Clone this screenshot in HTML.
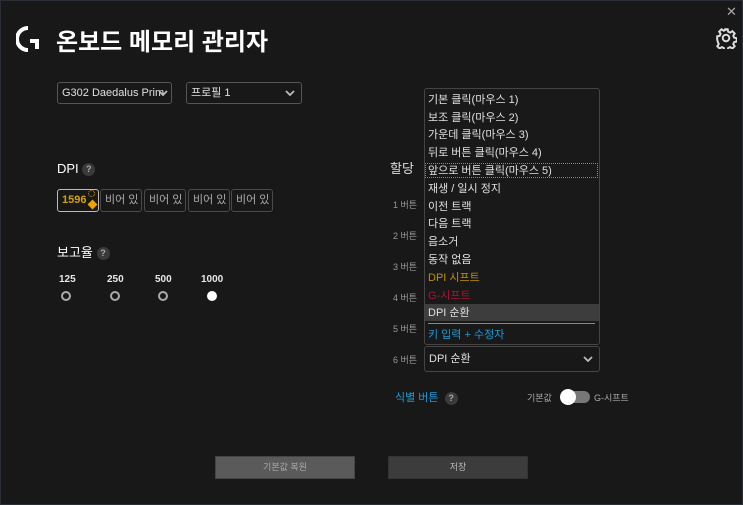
<!DOCTYPE html>
<html><head><meta charset="utf-8"><style>
*{margin:0;padding:0;box-sizing:border-box}
body{width:743px;height:505px;background:#181818;overflow:hidden;position:relative;font-family:"Liberation Sans","Noto Sans CJK KR",sans-serif;color:#e8e8e8}
.a{position:absolute;white-space:nowrap}
.q{display:inline-block;width:13px;height:13px;border-radius:50%;background:#3a3a3a;color:#aaa;font-size:9px;text-align:center;line-height:13px;vertical-align:middle;font-weight:bold}
.sel{position:absolute;border:1px solid #555;border-radius:3px;font-size:11px;padding-left:4px;line-height:20px;color:#e0e0e0;overflow:hidden}
.sel svg{position:absolute;top:50%;margin-top:-3px}
.dpi{position:absolute;top:189px;height:23px;border:1px solid #4a4a4a;border-radius:3px;font-size:11px;line-height:21px;padding-left:4px;color:#aaa;overflow:hidden;width:42px}
.r{position:absolute;top:291px;width:10px;height:10px;border:2px solid #aaa;border-radius:50%}
.it{position:absolute;left:428px;font-size:11px;color:#e0e0e0}
.bl{position:absolute;left:393px;font-size:9px;color:#999}
</style></head><body>
<div class="a" style="left:0;top:0;width:743px;height:505px;border:1px solid #2a2f36"></div>
<div class="a" style="left:726px;top:4px;font-size:13px;color:#aaa">✕</div>
<svg class="a" style="left:715px;top:27px" width="22" height="22" viewBox="0 0 20 20"><path d="M8.5 2h3l.5 2.3 1.8.8 2-1.3 2.1 2.1-1.3 2 .8 1.8 2.3.5v3l-2.3.5-.8 1.8 1.3 2-2.1 2.1-2-1.3-1.8.8-.5 2.3h-3l-.5-2.3-1.8-.8-2 1.3-2.1-2.1 1.3-2-.8-1.8L2 11.5v-3l2.3-.5.8-1.8-1.3-2 2.1-2.1 2 1.3 1.8-.8z" fill="none" stroke="#ddd" stroke-width="1.8"/><circle cx="10" cy="10" r="3" fill="none" stroke="#ddd" stroke-width="1.8"/></svg>
<svg class="a" style="left:16px;top:26px" width="26" height="26" viewBox="0 0 26 26"><path d="M12 2A11 11 0 0 0 12 24" fill="none" stroke="#fff" stroke-width="4"/><path d="M14 13h9v10h-4v-6h-5z" fill="#fff"/></svg>
<div class="a" style="left:56px;top:22px;font-size:24px;font-weight:bold;color:#fff">온보드 메모리 관리자</div>
<div class="sel" style="left:57px;top:82px;width:115px;height:22px">G302 Daedalus Prim<svg style="right:3px" width="10" height="6" viewBox="0 0 10 6"><path d="M1 1l4 4 4-4" fill="none" stroke="#bbb" stroke-width="1.8"/></svg></div>
<div class="sel" style="left:186px;top:82px;width:116px;height:22px">프로필 1<svg style="right:6px" width="10" height="6" viewBox="0 0 10 6"><path d="M1 1l4 4 4-4" fill="none" stroke="#bbb" stroke-width="1.8"/></svg></div>
<div class="a" style="left:57px;top:161px;font-size:13px;color:#fff">DPI <span class="q">?</span></div>
<div class="dpi" style="left:57px;border-color:#bbb;color:#d4a000;font-weight:bold">1596</div>
<div class="a" style="left:88px;top:190px;width:7px;height:7px;border:1px dotted #d4a000;border-radius:50%"></div>
<div class="a" style="left:89px;top:201px;width:7px;height:7px;background:#f0a000;transform:rotate(45deg)"></div>
<div class="dpi" style="left:100px">비어 있음</div>
<div class="dpi" style="left:144px">비어 있음</div>
<div class="dpi" style="left:188px">비어 있음</div>
<div class="dpi" style="left:231px">비어 있음</div>
<div class="a" style="left:57px;top:242px;font-size:13px;color:#fff">보고율 <span class="q">?</span></div>
<div class="a" style="left:59px;top:274px;font-size:10px;font-weight:bold">125</div>
<div class="a" style="left:107px;top:274px;font-size:10px;font-weight:bold">250</div>
<div class="a" style="left:155px;top:274px;font-size:10px;font-weight:bold">500</div>
<div class="a" style="left:201px;top:274px;font-size:10px;font-weight:bold">1000</div>
<div class="r" style="left:61px"></div><div class="r" style="left:110px"></div><div class="r" style="left:158px"></div><div class="r" style="left:207px;background:#fff;border-color:#fff"></div>
<div class="a" style="left:390px;top:158px;font-size:13px;color:#ddd">할당</div>
<div class="bl" style="top:198px">1 버튼</div><div class="bl" style="top:229px">2 버튼</div><div class="bl" style="top:260px">3 버튼</div><div class="bl" style="top:291px">4 버튼</div><div class="bl" style="top:322px">5 버튼</div><div class="bl" style="top:353px">6 버튼</div>
<div class="a" style="left:424px;top:88px;width:176px;height:257px;border:1px solid #444;border-radius:3px;background:#191919"></div>
<div class="a" style="left:425px;top:163px;width:173px;height:15px;border:1px dotted #888"></div>
<div class="a" style="left:425px;top:304px;width:174px;height:17px;background:#3d3d3d"></div>
<div class="a" style="left:428px;top:323px;width:167px;height:1px;background:#888"></div>
<div class="it" style="top:91px">기본 클릭(마우스 1)</div>
<div class="it" style="top:109px">보조 클릭(마우스 2)</div>
<div class="it" style="top:126px">가운데 클릭(마우스 3)</div>
<div class="it" style="top:144px">뒤로 버튼 클릭(마우스 4)</div>
<div class="it" style="top:162px">앞으로 버튼 클릭(마우스 5)</div>
<div class="it" style="top:180px">재생 / 일시 정지</div>
<div class="it" style="top:198px">이전 트랙</div>
<div class="it" style="top:215px">다음 트랙</div>
<div class="it" style="top:233px">음소거</div>
<div class="it" style="top:251px">동작 없음</div>
<div class="it" style="top:269px;color:#c09000">DPI 시프트</div>
<div class="it" style="top:287px;color:#b01030">G-시프트</div>
<div class="it" style="top:304px">DPI 순환</div>
<div class="it" style="top:326px;color:#1a9ad6">키 입력 + 수정자</div>
<div class="sel" style="left:424px;top:346px;width:176px;height:26px;line-height:24px;border-color:#444">DPI 순환<svg style="right:6px" width="10" height="6" viewBox="0 0 10 6"><path d="M1 1l4 4 4-4" fill="none" stroke="#bbb" stroke-width="1.8"/></svg></div>
<div class="a" style="left:395px;top:389px;font-size:11px;color:#1a9ad6">식별 버튼 &nbsp;<span class="q">?</span></div>
<div class="a" style="left:527px;top:391px;font-size:9px;color:#aaa">기본값</div>
<div class="a" style="left:562px;top:391px;width:28px;height:12px;border-radius:6px;background:#777"></div>
<div class="a" style="left:560px;top:389px;width:16px;height:16px;border-radius:50%;background:#fff"></div>
<div class="a" style="left:594px;top:391px;font-size:9px;color:#aaa">G-시프트</div>
<div class="a" style="left:215px;top:456px;width:140px;height:23px;background:#5a5a5a;border:1px solid #444;font-size:9px;color:#aaa;text-align:center;line-height:21px">기본값 복원</div>
<div class="a" style="left:388px;top:456px;width:140px;height:23px;background:#3c3c3c;border:1px solid #333;font-size:9px;color:#bbb;text-align:center;line-height:21px">저장</div>
</body></html>
